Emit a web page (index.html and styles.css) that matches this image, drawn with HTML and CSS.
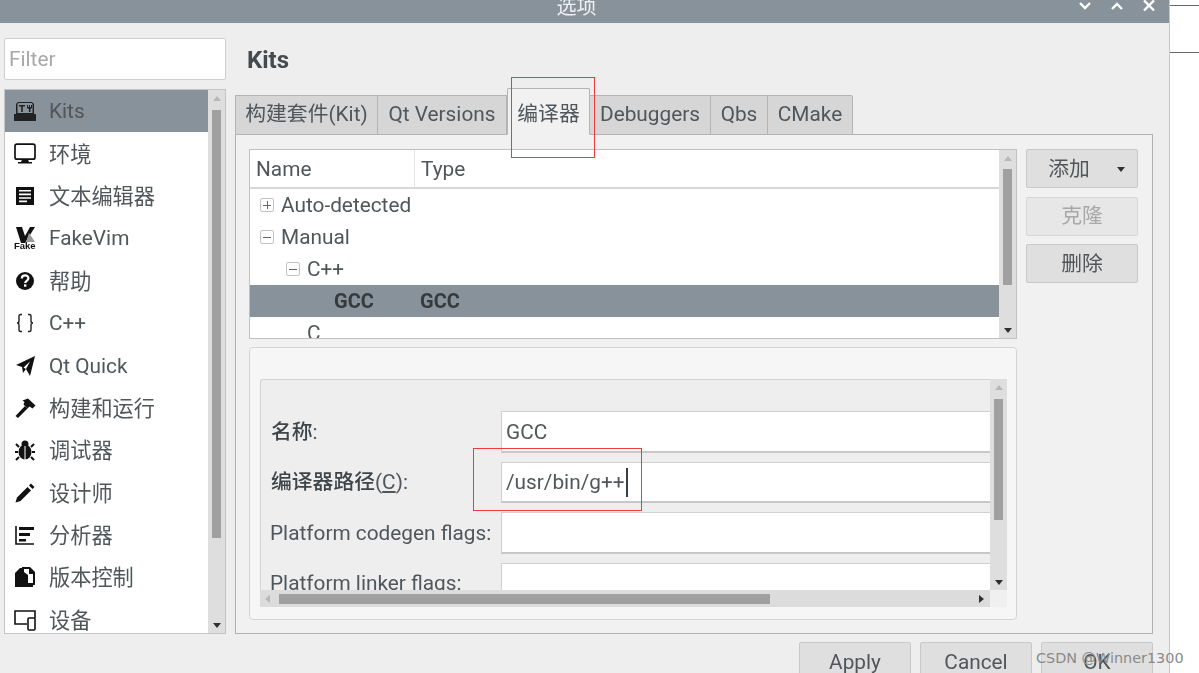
FILE: index.html
```html
<!DOCTYPE html>
<html lang="zh-CN">
<head>
    <meta charset="UTF-8">
    <meta name="viewport" content="width=device-width, initial-scale=1.0">
    <title>选项</title>
    <link rel="stylesheet" href="styles.css">
</head>
<body>
    <div class="screen">
        <div class="window">
            <div class="titlebar">
                <span class="title">选项</span>
                <div class="winbtns">
                    <svg width="14" height="10" viewBox="0 0 14 10"><path d="M2 2l5 5 5-5" fill="none" stroke="#fff" stroke-width="2.4"/></svg>
                    <svg width="14" height="10" viewBox="0 0 14 10"><path d="M2 8l5-5 5 5" fill="none" stroke="#fff" stroke-width="2.4"/></svg>
                    <svg width="14" height="12" viewBox="0 0 14 12"><path d="M2 0.5l10 10M12 0.5l-10 10" fill="none" stroke="#fff" stroke-width="2.4"/></svg>
                </div>
            </div>
            <div class="main">
                <div class="leftcol">
                    <div class="filter">Filter</div>
                    <div class="navlist">
                        <div class="navitems">
                            <div class="navitem selected">
                                <svg class="navicon" viewBox="0 0 22 22"><path d="M0 21V14h2V4l2-2h14l2 2v10h2v7z" fill="#222"/><path d="M3.500 13V4l1-1h13l1 1v9z" fill="#87929a"/><path d="M5 5h6v1.600H8.800V12H7.200V6.600H5zM13 5h1v2h1V5h1v2h1V5h1v3l-1.500 1v3h-1.600V9L13 8z" fill="#222"/></svg>
                                <span>Kits</span>
                            </div>
                            <div class="navitem">
                                <svg class="navicon" viewBox="0 0 22 22"><rect x="1" y="1.200" width="20" height="15" rx="2" fill="none" stroke="#111" stroke-width="1.700"/><path d="M8 16.500h6l1 2.500h3v1.500H4V19h3z" fill="#111"/></svg>
                                <span class="zh">环境</span>
                            </div>
                            <div class="navitem">
                                <svg class="navicon" viewBox="0 0 22 22"><path d="M2 2h18v18H2z" fill="#111"/><path d="M5 5h12v1.600H5zM5 8.600h12v1.600H5zM5 12.200h12v1.600H5zM5 15.600h8v1.600H5z" fill="#fff"/></svg>
                                <span class="zh">文本编辑器</span>
                            </div>
                            <div class="navitem">
                                <svg class="navicon" viewBox="0 0 22 22"><path d="M2 0h6l3 9 5-9h5L11 16H7z" fill="#111"/><path d="M15 6l6 9h-9z" fill="#999"/><text x="0" y="21.500" class="faketext">Fake</text></svg>
                                <span>FakeVim</span>
                            </div>
                            <div class="navitem">
                                <svg class="navicon" viewBox="0 0 22 22"><circle cx="11" cy="11" r="9" fill="#111"/><path d="M7.800 8.600c0-4.200 6.600-4.200 6.600-.3 0 2.600-3.200 2.500-3.200 4.700" fill="none" stroke="#fff" stroke-width="2.200"/><rect x="10" y="14.300" width="2.400" height="2.400" fill="#fff"/></svg>
                                <span class="zh">帮助</span>
                            </div>
                            <div class="navitem">
                                <svg class="navicon" viewBox="0 0 22 22"><path d="M8 2.500H6.500Q5 2.500 5 4v5q0 2-2 2 2 0 2 2v5q0 1.500 1.500 1.500H8M14 2.500h1.500Q17 2.500 17 4v5q0 2 2 2-2 0-2 2v5q0 1.500-1.500 1.500H14" fill="none" stroke="#222" stroke-width="1.400"/></svg>
                                <span>C++</span>
                            </div>
                            <div class="navitem">
                                <svg class="navicon" viewBox="0 0 22 22"><path d="M21 1L16 21l-4-7-3 4-1-6-6-2z" fill="#111"/><path d="M16 6.500L9.500 12.500l2.500 1.500z" fill="#fff"/></svg>
                                <span>Qt Quick</span>
                            </div>
                            <div class="navitem">
                                <svg class="navicon" viewBox="0 0 22 22"><path d="M1.500 19l9.500-10 2.500 2.500-9.500 9.500z" fill="#111"/><path d="M8.500 3.500l5.500-2 7.500 7-3 3-3-2-2 2-4-4 1-2.500z" fill="#111"/></svg>
                                <span class="zh">构建和运行</span>
                            </div>
                            <div class="navitem">
                                <svg class="navicon" viewBox="0 0 22 22"><ellipse cx="11" cy="13" rx="6.500" ry="7.500" fill="#111"/><circle cx="11" cy="5" r="3.500" fill="#111"/><path d="M11 7v14" stroke="#fff" stroke-width="1"/><path d="M5 8L2 5M17 8l3-3M4 13H1M18 13h3M5 18l-3 3M17 18l3 3" stroke="#111" stroke-width="2"/></svg>
                                <span class="zh">调试器</span>
                            </div>
                            <div class="navitem">
                                <svg class="navicon" viewBox="0 0 22 22"><path d="M1.500 20.500l1.500-5L13.500 5l3.500 3.500L6.500 19z" fill="#111"/><path d="M15 3.500L17 1.500l3.500 3.500-2 2z" fill="#111"/></svg>
                                <span class="zh">设计师</span>
                            </div>
                            <div class="navitem">
                                <svg class="navicon" viewBox="0 0 22 22"><path d="M2 2v18h18" fill="none" stroke="#111" stroke-width="1.600"/><path d="M5 3h15v3H5zM5 9h11v3H5zM5 15h7v2.500H5z" fill="#111"/></svg>
                                <span class="zh">分析器</span>
                            </div>
                            <div class="navitem">
                                <svg class="navicon" viewBox="0 0 22 22"><path d="M1 7l5-5h3v17h10v2H1z" fill="#111"/><path d="M8 1h8l5 5v13H8z" fill="#111"/><path d="M10 3h5v5h4v9h-5V9l-4-3z" fill="#fff"/></svg>
                                <span class="zh">版本控制</span>
                            </div>
                            <div class="navitem">
                                <svg class="navicon" viewBox="0 0 22 22"><path d="M13 15H1V2h20v7" fill="none" stroke="#111" stroke-width="1.600"/><rect x="14" y="9" width="7" height="12" rx="1" fill="#fff" stroke="#111" stroke-width="1.600"/></svg>
                                <span class="zh">设备</span>
                            </div>
                        </div>
                        <div class="vbar navbar">
                            <i class="arrow up"></i>
                            <b class="thumb"></b>
                            <i class="arrow down"></i>
                        </div>
                    </div>
                </div>
                <div class="rightcol">
                    <h1>Kits</h1>
                    <div class="tabs">
                        <div class="tab tab-kit">构建套件(Kit)</div>
                        <div class="tab tab-qt">Qt Versions</div>
                        <div class="tab tab-compiler active">编译器</div>
                        <div class="tab tab-debug">Debuggers</div>
                        <div class="tab tab-qbs">Qbs</div>
                        <div class="tab tab-cmake">CMake</div>
                    </div>
                    <div class="pane">
                        <div class="panemain">
                            <div class="tree">
                                <div class="treebody">
                                    <div class="treehead">
                                        <div class="col-name">Name</div>
                                        <div class="col-type">Type</div>
                                    </div>
                                    <div class="treerow"><i class="exp plus"></i>Auto-detected</div>
                                    <div class="treerow"><i class="exp"></i>Manual</div>
                                    <div class="treerow lvl1"><i class="exp"></i>C++</div>
                                    <div class="treerow current"><span class="gcc-name">GCC</span><span>GCC</span></div>
                                    <div class="treerow lvl1 leaf">C</div>
                                </div>
                                <div class="vbar treebar">
                                    <i class="arrow up"></i>
                                    <b class="thumb"></b>
                                    <i class="arrow down"></i>
                                </div>
                            </div>
                            <div class="group">
                                <div class="scrollarea">
                                    <div class="form">
                                        <label><span class="strong">名称</span>:</label>
                                        <div class="field">GCC</div>
                                        <label><span class="strong">编译器路径</span>(<u>C</u>):</label>
                                        <div class="field">/usr/bin/g++<span class="caret"></span></div>
                                        <label>Platform codegen flags:</label>
                                        <div class="field"></div>
                                        <label>Platform linker flags:</label>
                                        <div class="field"></div>
                                    </div>
                                    <div class="vbar formbar">
                                        <i class="arrow up"></i>
                                        <b class="thumb"></b>
                                        <i class="arrow down"></i>
                                    </div>
                                    <div class="hbar">
                                        <i class="arrow left"></i>
                                        <b class="thumb"></b>
                                        <i class="arrow right"></i>
                                    </div>
                                    <div class="corner"></div>
                                </div>
                            </div>
                        </div>
                        <div class="panebtns">
                            <div class="btn btn-add">添加<i class="arrow down"></i></div>
                            <div class="btn disabled">克隆</div>
                            <div class="btn">删除</div>
                        </div>
                    </div>
                </div>
            </div>
            <div class="footer">
                <div class="btn">Apply</div>
                <div class="btn">Cancel</div>
                <div class="btn">OK</div>
            </div>
        </div>
        <div class="side"></div>
    </div>
    <div class="redbox box-tab"></div>
    <div class="redbox box-path"></div>
    <div class="watermark">CSDN @Winner1300</div>
</body>
</html>
```

FILE: styles.css
```css
html, body {
    margin: 0;
    padding: 0;
    height: 673px;
    overflow: hidden;
    background-color: #ffffff;
}
body {
    font-family: Roboto, "Noto Sans CJK SC", sans-serif;
    font-size: 20.8px;
    line-height: 26px;
    color: #50565a;
    position: relative;
}
.screen {
    display: flex;
    width: 1199px;
    height: 673px;
    filter: blur(0.5px);
}
.window {
    width: 1169px;
    height: 673px;
    overflow: hidden;
    background-color: #eeeeee;
    border-right: 1px solid #c8c8c8;
    flex: none;
}
.side {
    flex: 1;
    height: 46px;
    margin-top: 5px;
    border-top: 1px solid #666666;
    border-bottom: 1px solid #666666;
}

/* title bar */
.titlebar {
    height: 23px;
    margin-right: -1px;
    background-color: #87929a;
    position: relative;
    display: flex;
    justify-content: center;
    overflow: hidden;
}
.title {
    color: #eef0f1;
    font-size: 20px;
    line-height: 14px;
    margin-right: 17px;
}
.winbtns {
    position: absolute;
    right: 14px;
    top: 0;
    display: flex;
    gap: 18px;
    align-items: center;
    height: 11px;
}

/* left column */
.main {
    display: flex;
    padding-left: 4px;
    gap: 9px;
}
.leftcol {
    width: 222px;
    padding-top: 15px;
    flex: none;
}
.filter {
    height: 42px;
    box-sizing: border-box;
    background-color: #ffffff;
    border: 1px solid #cfcfcf;
    border-radius: 2px;
    padding-left: 4px;
    line-height: 41px;
    color: #a8a8a8;
    margin-bottom: 9px;
}
.navlist {
    height: 545px;
    box-sizing: border-box;
    border: 1px solid #c4c4c4;
    display: flex;
    background-color: #ffffff;
    overflow: hidden;
}
.navitems {
    flex: 1;
    overflow: hidden;
}
.navitem {
    height: 42.4px;
    display: flex;
    align-items: center;
    padding-left: 9px;
    gap: 13px;
}
.navitem.selected {
    background-color: #87929a;
}
.navitem .zh {
    font-size: 21.2px;
    margin-top: 2px;
}
.navicon {
    width: 22px;
    height: 22px;
    flex: none;
}
.faketext {
    font-family: "Liberation Sans", sans-serif;
    font-size: 9.5px;
    font-weight: bold;
    fill: #111111;
}

/* scroll bars */
.vbar {
    width: 17px;
    flex: none;
    background-color: #dedede;
    display: flex;
    flex-direction: column;
    align-items: center;
    position: relative;
    box-sizing: border-box;
}
.thumb {
    display: block;
    background-color: #a0a0a0;
}
.vbar .thumb {
    width: 9px;
}
.arrow {
    display: block;
    width: 0;
    height: 0;
    border-left: 4px solid transparent;
    border-right: 4px solid transparent;
}
.arrow.up {
    border-bottom: 5px solid #b8b8b8;
}
.arrow.down {
    border-top: 5px solid #303030;
}
.arrow.left {
    border: 4px solid transparent;
    border-left: 0;
    border-right: 5px solid #b8b8b8;
}
.arrow.right {
    border: 4px solid transparent;
    border-right: 0;
    border-left: 5px solid #303030;
}
.vbar .arrow.up {
    margin-top: 6px;
    margin-bottom: 9px;
}
.vbar .arrow.down {
    margin-top: auto;
    margin-bottom: 5px;
}
.navbar {
    height: 100%;
}
.navbar .thumb {
    height: 428px;
}
.treebar .thumb {
    height: 116px;
}
.treebar .arrow.up {
    margin-bottom: 8px;
}
.formbar .thumb {
    height: 121px;
}

/* right column */
.rightcol {
    width: 918px;
    flex: none;
}
h1 {
    margin: 0;
    height: 65px;
    padding-left: 12px;
    font-size: 24px;
    font-weight: bold;
    line-height: 74px;
    color: #454a4e;
}
.tabs {
    display: flex;
    align-items: flex-end;
    height: 47px;
    margin-bottom: -1px;
    position: relative;
    z-index: 1;
}
.tab {
    height: 40px;
    box-sizing: border-box;
    background-color: #d6d6d6;
    border: 1px solid #b4b4b4;
    border-left: none;
    display: flex;
    align-items: center;
    justify-content: center;
    padding-bottom: 2px;
}
.tab-kit { width: 143px; border-left: 1px solid #b4b4b4; }
.tab-qt { width: 129px; }
.tab-compiler { width: 83px; }
.tab-debug { width: 121px; }
.tab-qbs { width: 57px; }
.tab-cmake { width: 85px; border-top-right-radius: 2px; }
.tab.active {
    height: 47px;
    background-color: #f1f1f1;
    border-bottom: 1px solid #f1f1f1;
    border-left: 1px solid #b4b4b4;
    border-top-left-radius: 2px;
    border-top-right-radius: 2px;
    align-items: flex-end;
    padding-bottom: 7px;
}
.pane {
    height: 500px;
    box-sizing: border-box;
    border: 1px solid #b0b0b0;
    background-color: #f1f1f1;
    padding: 14px 13px;
    display: flex;
    gap: 9px;
}
.panemain {
    width: 768px;
    flex: none;
}

/* compiler tree */
.tree {
    height: 190px;
    box-sizing: border-box;
    border: 1px solid #c0c0c0;
    background-color: #ffffff;
    display: flex;
    margin-bottom: 8px;
}
.treebody {
    flex: 1;
    overflow: hidden;
}
.treehead {
    display: flex;
    height: 39px;
    box-sizing: border-box;
    border-bottom: 2px solid #d8d8d8;
    line-height: 39px;
}
.col-name {
    width: 165px;
    padding-left: 6px;
    box-sizing: border-box;
    border-right: 1px solid #e4e4e4;
}
.col-type {
    padding-left: 6px;
}
.treerow {
    height: 32px;
    display: flex;
    align-items: center;
    padding-left: 10px;
    box-sizing: border-box;
}
.treerow.lvl1 {
    padding-left: 36px;
}
.treerow.leaf {
    padding-left: 57px;
}
.treerow.current {
    background-color: #87929a;
    font-weight: bold;
    font-size: 20px;
    color: #343a3e;
    padding-left: 84px;
}
.gcc-name {
    width: 86px;
}
.exp {
    width: 14px;
    height: 14px;
    box-sizing: border-box;
    border: 1px solid #c4c4c4;
    border-radius: 2px;
    margin-right: 7px;
    position: relative;
    flex: none;
}
.exp::before {
    content: "";
    position: absolute;
    left: 2px;
    right: 2px;
    top: 5.5px;
    height: 1px;
    background-color: #666666;
}
.exp.plus::after {
    content: "";
    position: absolute;
    top: 2px;
    bottom: 2px;
    left: 5.5px;
    width: 1px;
    background-color: #666666;
}

/* form group */
.group {
    height: 273px;
    box-sizing: border-box;
    border: 1px solid #d4d4d4;
    border-radius: 4px;
    background-color: #f6f6f6;
    padding: 31px 9px 12px 10px;
}
.scrollarea {
    height: 228px;
    display: grid;
    grid-template-columns: 730px 17px;
    grid-template-rows: 211px 17px;
}
.form {
    background-color: #eeeeee;
    border-top: 1px solid #d4d4d4;
    border-left: 1px solid #d4d4d4;
    border-top-left-radius: 3px;
    overflow: hidden;
    padding: 31px 0 0 9px;
    display: grid;
    grid-template-columns: 231px 1fr;
    grid-auto-rows: 41.5px;
    row-gap: 9px;
    align-items: center;
}
.form .strong {
    color: #3f4549;
    font-weight: 500;
    padding-left: 1px;
}
.form u {
    text-underline-offset: 2px;
}
.field {
    height: 41.5px;
    box-sizing: border-box;
    background-color: #ffffff;
    border: 1px solid #d0d0d0;
    border-right: none;
    border-bottom: 2px solid #c8c8c8;
    padding: 1px 0 0 4px;
    display: flex;
    align-items: center;
}
.caret {
    display: block;
    width: 2px;
    height: 29px;
    margin-left: 1px;
    background-color: #3a3f44;
}
.hbar {
    background-color: #dcdcdc;
    display: flex;
    align-items: center;
    padding-left: 5px;
}
.hbar .thumb {
    width: 491px;
    height: 10px;
    margin-left: 9px;
}
.hbar .arrow.right {
    margin-left: auto;
    margin-right: 6px;
}
.corner {
    background-color: #f0f0f0;
}

/* buttons */
.panebtns {
    width: 112px;
    flex: none;
    display: flex;
    flex-direction: column;
    gap: 8.5px;
}
.btn {
    height: 39px;
    box-sizing: border-box;
    background-color: #dfdfdf;
    border: 1px solid #c8c8c8;
    border-radius: 2px;
    display: flex;
    align-items: center;
    justify-content: center;
    flex: none;
}
.btn.disabled {
    background-color: #e7e7e7;
    border-color: #d6d6d6;
    color: #a8a8a8;
}
.btn-add {
    position: relative;
    padding-right: 26px;
}
.btn-add .arrow {
    position: absolute;
    right: 12px;
    top: 17px;
}
.footer {
    display: flex;
    justify-content: flex-end;
    gap: 9px;
    width: 1153px;
    margin-top: 8px;
}
.footer .btn {
    width: 112px;
    height: 40px;
}

/* overlays */
.redbox {
    position: absolute;
    border: 1px solid #f03a3a;
    box-sizing: border-box;
}
.box-tab {
    left: 511px;
    top: 77px;
    width: 84px;
    height: 81px;
}
.box-path {
    left: 473px;
    top: 448px;
    width: 169px;
    height: 63px;
}
.watermark {
    position: absolute;
    left: 1036px;
    top: 649px;
    font-family: "DejaVu Sans", sans-serif;
    font-size: 14.4px;
    line-height: 18px;
    color: #8a8a8a;
    white-space: nowrap;
}
```
